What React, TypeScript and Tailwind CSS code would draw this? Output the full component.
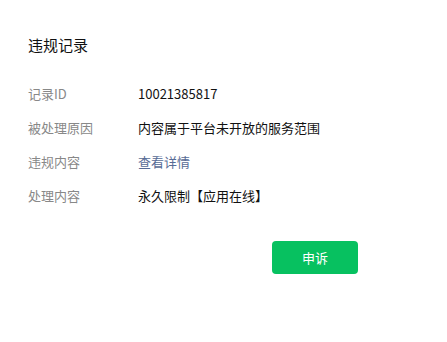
import React from "react";

const rows: { label: string; value: string; link?: boolean }[] = [
  { label: "记录ID", value: "10021385817" },
  { label: "被处理原因", value: "内容属于平台未开放的服务范围" },
  { label: "违规内容", value: "查看详情", link: true },
  { label: "处理内容", value: "永久限制【应用在线】" },
];

const App = () => {
  return (
    <div
      className="w-[447px] h-[342px] bg-white pl-[28px] pt-[35px]"
      style={{ fontFamily: '"Noto Sans CJK SC", "Noto Sans", sans-serif' }}
    >
      <h1 className="text-[15px] leading-[20px] font-normal text-[#111]">违规记录</h1>
      <div className="mt-[29px] flex flex-col gap-[14px]">
        {rows.map((r) => (
          <div key={r.label} className="flex text-[13px] leading-[20px]">
            <div className="w-[110px] text-[#888]">{r.label}</div>
            <div className={r.link ? "text-[#576b95]" : "text-[#111]"}>{r.value}</div>
          </div>
        ))}
      </div>
      <div className="mt-[35px] flex justify-end pr-[89px]">
        <button className="w-[86px] h-[33px] rounded-[4px] bg-[#07c160] text-white text-[13px] font-normal">
          申诉
        </button>
      </div>
    </div>
  );
};

export default App;
